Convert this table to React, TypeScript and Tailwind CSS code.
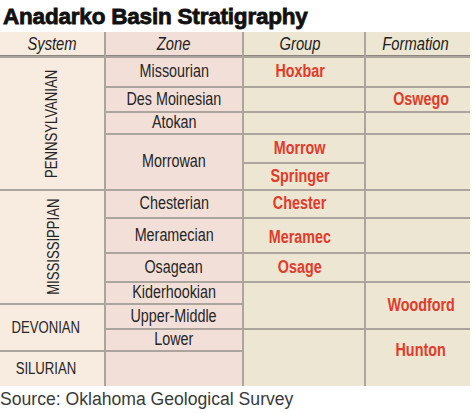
// no condensed face installed, so text is squeezed with scale-x
function Cell({ className, children }: { className: string; children?: React.ReactNode }) {
  return (
    <div className={`flex items-center justify-center whitespace-nowrap ${className}`}>
      {children && <span className="inline-block scale-x-[0.82]">{children}</span>}
    </div>
  );
}

function Upright({ className, children }: { className: string; children: React.ReactNode }) {
  return (
    <div className={`flex items-center justify-center whitespace-nowrap ${className}`}>
      <span className="inline-block rotate-180 scale-y-[0.82] [writing-mode:vertical-rl]">{children}</span>
    </div>
  );
}

function Head({ col, bg, children }: { col: string; bg: string; children: React.ReactNode }) {
  return (
    <Cell className={`${col} row-start-1 ${bg} border-b border-[#8c867e] text-[18px] italic text-[#222]`}>
      {children}
    </Cell>
  );
}

export default function App() {
  const sys = "col-start-1 bg-[#f8ebdf] text-[16px] text-[#262626]";
  const zone = "col-start-2 bg-[#f2dfd8] text-[17.5px] text-[#262626]";
  const group = "col-start-3 bg-[#ece6d2] pr-[8px] text-[17.5px] font-bold text-[#e33a2a]";
  const form = "col-start-4 bg-[#ece6d2] pl-[6px] text-[17.5px] font-bold text-[#e33a2a]";

  return (
    <div className="w-[474px] h-[413px] overflow-hidden bg-white font-['Liberation_Sans',Arial,sans-serif]">
      {/* Title */}
      <h1 className="pl-[3px] pt-[6px] text-[22.5px] leading-[22px] font-bold tracking-[-0.2px] text-[#111] [-webkit-text-stroke:0.8px_#111]">
        Anadarko Basin Stratigraphy
      </h1>

      {/* Table */}
      <div className="mt-[4px] grid w-[470px] grid-cols-[104px_136px_120px_104px] grid-rows-[24px_28px_23px_20px_27px_25px_26px_33px_27px_20px_23px_20px_34px] gap-[2px] bg-[#aba59d] leading-none">
        <Head col="col-start-1" bg="bg-[#f8ebdf]">System</Head>
        <Head col="col-start-2" bg="bg-[#f2dfd8]">Zone</Head>
        <Head col="col-start-3 pr-[8px]" bg="bg-[#ece6d2]">Group</Head>
        <Head col="col-start-4 pr-[4px]" bg="bg-[#ece6d2]">Formation</Head>

        {/* System */}
        <Upright className={`${sys} row-start-2 row-span-5`}>PENNSYLVANIAN</Upright>
        <Upright className={`${sys} row-start-7 row-span-4 pl-[4px]`}>MISSISSIPPIAN</Upright>
        <Cell className={`${sys} row-start-11 row-span-2 pr-[12px]`}>DEVONIAN</Cell>
        <Cell className={`${sys} row-start-13 pr-[12px]`}>SILURIAN</Cell>

        {/* Zone */}
        <Cell className={`${zone} row-start-2`}>Missourian</Cell>
        <Cell className={`${zone} row-start-3`}>Des Moinesian</Cell>
        <Cell className={`${zone} row-start-4`}>Atokan</Cell>
        <Cell className={`${zone} row-start-5 row-span-2`}>Morrowan</Cell>
        <Cell className={`${zone} row-start-7`}>Chesterian</Cell>
        <Cell className={`${zone} row-start-8`}>Meramecian</Cell>
        <Cell className={`${zone} row-start-9`}>Osagean</Cell>
        <Cell className={`${zone} row-start-10`}>Kiderhookian</Cell>
        <Cell className={`${zone} row-start-11`}>Upper-Middle</Cell>
        <Cell className={`${zone} row-start-12`}>Lower</Cell>
        <Cell className={`${zone} row-start-13`} />

        {/* Group */}
        <Cell className={`${group} row-start-2`}>Hoxbar</Cell>
        <Cell className={`${group} row-start-3`} />
        <Cell className={`${group} row-start-4`} />
        <Cell className={`${group} row-start-5`}>Morrow</Cell>
        <Cell className={`${group} row-start-6`}>Springer</Cell>
        <Cell className={`${group} row-start-7`}>Chester</Cell>
        <Cell className={`${group} row-start-8 pt-[4px]`}>Meramec</Cell>
        <Cell className={`${group} row-start-9`}>Osage</Cell>
        <Cell className={`${group} row-start-10 row-span-2`} />
        <Cell className={`${group} row-start-12 row-span-2`} />

        {/* Formation */}
        <Cell className={`${form} row-start-2`} />
        <Cell className={`${form} row-start-3`}>Oswego</Cell>
        <Cell className={`${form} row-start-4`} />
        <Cell className={`${form} row-start-5 row-span-2`} />
        <Cell className={`${form} row-start-7`} />
        <Cell className={`${form} row-start-8`} />
        <Cell className={`${form} row-start-9`} />
        <Cell className={`${form} row-start-10 row-span-2`}>Woodford</Cell>
        <Cell className={`${form} row-start-12 row-span-2 pb-[14px]`}>Hunton</Cell>
      </div>

      {/* Source */}
      <p className="mt-[4px] text-[17.6px] leading-[18px] text-[#3a3a3a]">
        Source: Oklahoma Geological Survey
      </p>
    </div>
  );
}
